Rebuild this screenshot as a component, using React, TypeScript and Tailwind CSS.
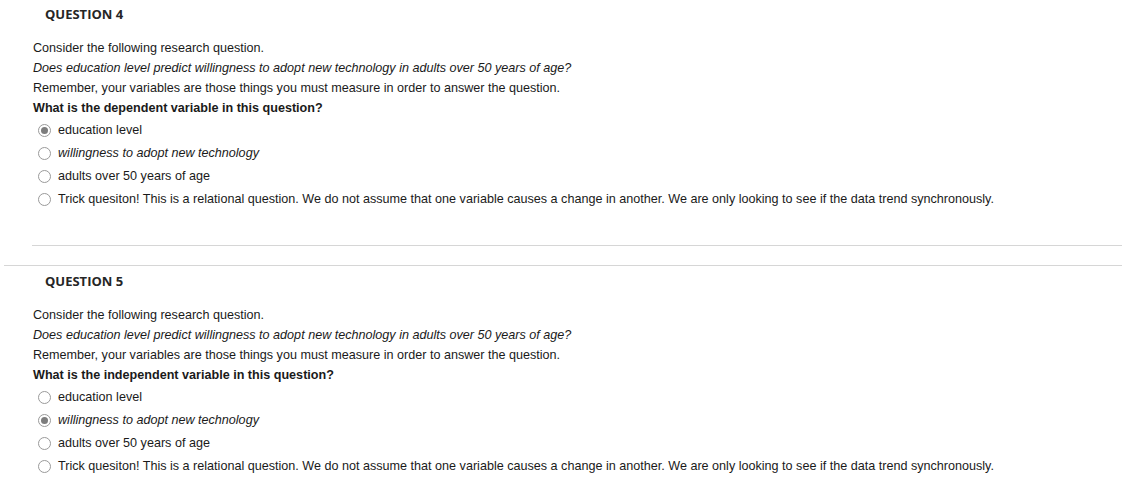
import React from "react";

type Opt = { label: string; italic?: boolean };

const options: Opt[] = [
  { label: "education level" },
  { label: "willingness to adopt new technology", italic: true },
  { label: "adults over 50 years of age" },
  {
    label:
      "Trick quesiton! This is a relational question. We do not assume that one variable causes a change in another. We are only looking to see if the data trend synchronously.",
  },
];

const Radio = ({ checked }: { checked: boolean }) => (
  <span className="inline-flex h-[13px] w-[13px] shrink-0 items-center justify-center rounded-full border border-[#9a9a9a] bg-white">
    {checked && <span className="h-[7px] w-[7px] rounded-full bg-[#7d7d7d]" />}
  </span>
);

const Question = ({
  num,
  kind,
  selected,
  first,
}: {
  num: number;
  kind: string;
  selected: number;
  first?: boolean;
}) => (
  <div className={first ? "pt-[4px]" : "ml-[4px] border-t border-[#d6d6d6] pt-[5px]"}>
    <h3
      className={`${first ? "ml-[45px]" : "ml-[41px]"} text-[13px] font-bold leading-[20px] text-[#262626]`}
      style={{ fontFamily: '"Open Sans", sans-serif' }}
    >
      QUESTION {num}
    </h3>
    <div
      className={`${first ? "ml-[33px]" : "ml-[29px]"} mt-[14px] text-[12.6px] text-[#1a1a1a]`}
      style={{ fontFamily: '"Liberation Sans", Arial, sans-serif' }}
    >
      <div className="leading-[20px]">
        <p>Consider the following research question.</p>
        <p className="italic">Does education level predict willingness to adopt new technology in adults over 50 years of age?</p>
        <p>Remember, your variables are those things you must measure in order to answer the question.</p>
        <p className="font-bold">What is the {kind} variable in this question?</p>
      </div>
      <ul className="mt-[1px]">
        {options.map((o, i) => (
          <li key={i} className="flex h-[23px] items-center gap-[7px] pl-[5px]">
            <Radio checked={i === selected} />
            <span className={o.italic ? "italic" : ""}>{o.label}</span>
          </li>
        ))}
      </ul>
    </div>
  </div>
);

export default function App() {
  return (
    <div className="h-[503px] w-[1122px] overflow-hidden bg-white">
      <Question num={4} kind="dependent" selected={0} first />
      <div className="ml-[32px] mt-[34px] border-b border-[#d6d6d6]" />
      <div className="mt-[19px]">
        <Question num={5} kind="independent" selected={1} />
      </div>
    </div>
  );
}
